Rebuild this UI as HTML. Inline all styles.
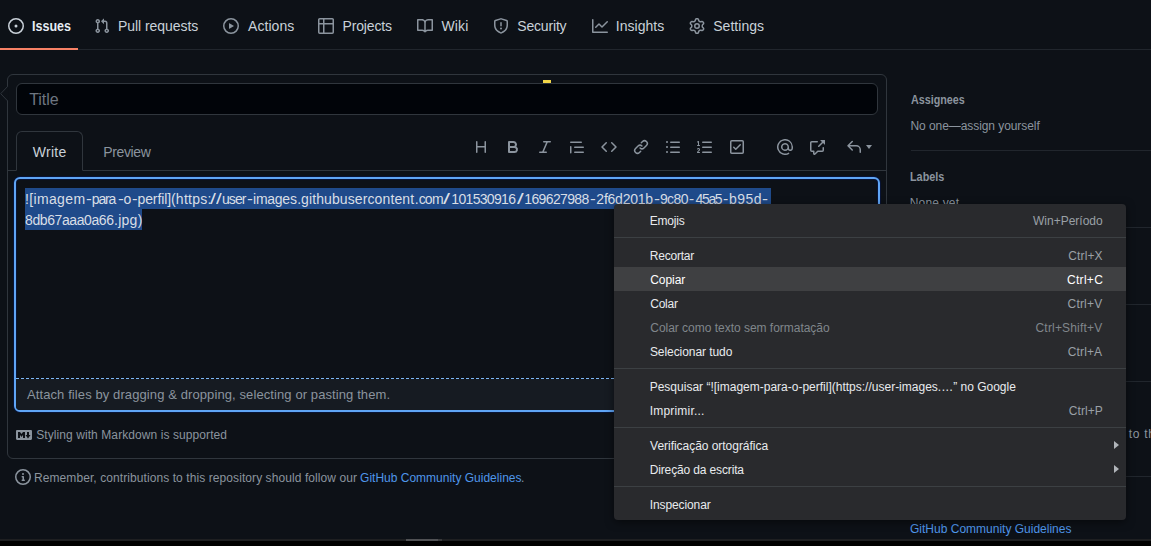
<!DOCTYPE html>
<html lang="en">
<head>
<meta charset="utf-8">
<title>New Issue</title>
<style>
html,body{margin:0;padding:0;}
body{width:1151px;height:546px;overflow:hidden;position:relative;background:#0d1117;font-family:'Liberation Sans',sans-serif;}
.t i{font-style:normal;}
.t{position:absolute;white-space:nowrap;line-height:20px;height:20px;}
.i{position:absolute;display:block;}
.b{position:absolute;box-sizing:border-box;}
.hl{position:absolute;height:1px;background:#21262d;}
#menu{position:absolute;left:614px;top:204px;width:512px;height:316px;background:#292a2d;border-radius:4px;z-index:4;box-shadow:0 2px 8px rgba(0,0,0,.5);}
#menu .sep{position:absolute;left:0;right:0;height:1px;background:#3c4043;}
#menu .hi{position:absolute;left:0;right:0;top:63px;height:24px;background:#3f4042;}
.arr{position:absolute;width:0;height:0;border-style:solid;border-width:4px 0 4px 5.5px;border-color:transparent transparent transparent #b0b4b9;z-index:5;}
</style>
</head>
<body>
<!-- repository navigation -->
<div class="hl" style="left:0;top:49px;width:1151px;"></div>
<div class="b" style="left:0;top:48px;width:78px;height:2px;background:#f78166;"></div>

<!-- comment box -->
<div class="b" style="left:7px;top:74px;width:880px;height:385px;border:1px solid #30363d;border-radius:6px;"></div>
<svg class="i" style="left:0;top:85px;" width="9" height="18" viewBox="0 0 9 18"><path d="M8 1.300 L0.700 8.700 L8 16.100 Z" fill="#0d1117" stroke="none"/><rect x="7" y="2.200" width="1.200" height="13" fill="#0d1117"/><path d="M7.600 1.500 L0.700 8.700 L7.600 15.900" fill="none" stroke="#30363d" stroke-width="1"/></svg>
<!-- title input -->
<div class="b" style="left:16px;top:83px;width:862px;height:32px;border:1px solid #30363d;border-radius:6px;background:#010409;"></div>
<div class="b" style="left:543px;top:80px;width:8px;height:3px;background:#f2d648;"></div>
<!-- tabs -->
<div class="hl" style="left:8px;top:170px;width:878px;background:#30363d;"></div>
<div class="b" style="left:16px;top:131px;width:67px;height:40px;border:1px solid #30363d;border-bottom:1px solid #0d1117;border-radius:6px 6px 0 0;background:#0d1117;"></div>
<!-- textarea -->
<div class="b" style="left:14px;top:177px;width:866px;height:235px;border:2px solid #5fa5f5;border-radius:6px;background:#0d1117;box-shadow:0 0 0 1px rgba(6,24,80,.55),inset 0 0 0 1px rgba(6,24,80,.55);"></div>
<div class="b" style="left:16px;top:379px;width:862px;height:31px;background:#161b22;border-radius:0 0 4px 4px;"></div>
<div class="b" style="left:16px;top:378px;width:862px;height:1px;background:repeating-linear-gradient(90deg,#7db6f5 0,#7db6f5 3px,transparent 3px,transparent 5px);"></div>
<div class="b" style="left:25px;top:188px;width:746px;height:21px;background:#1f4a8a;"></div>
<div class="b" style="left:25px;top:209px;width:117px;height:21px;background:#1f4a8a;"></div>

<!-- sidebar dividers -->
<div class="hl" style="left:911px;top:150px;width:240px;"></div>
<div class="hl" style="left:910px;top:227px;width:241px;"></div>
<div class="hl" style="left:910px;top:304px;width:241px;"></div>
<div class="hl" style="left:910px;top:381px;width:241px;"></div>
<div class="hl" style="left:910px;top:476px;width:241px;"></div>

<svg class="i" style="left:8px;top:18px;" width="16" height="16" viewBox="0 0 16 16" fill="#c9d1d9"><path d="M8 9.5a1.5 1.5 0 1 0 0-3 1.5 1.5 0 0 0 0 3Z"/><path d="M8 0a8 8 0 1 1 0 16A8 8 0 0 1 8 0ZM1.5 8a6.5 6.5 0 1 0 13 0 6.5 6.5 0 0 0-13 0Z"/></svg>
<svg class="i" style="left:94px;top:18px;" width="16" height="16" viewBox="0 0 16 16" fill="#8b949e"><path d="M1.5 3.25a2.25 2.25 0 1 1 3 2.122v5.256a2.251 2.251 0 1 1-1.5 0V5.372A2.25 2.25 0 0 1 1.5 3.25Zm5.677-.177L9.573.677A.25.25 0 0 1 10 .854V2.5h1A2.5 2.5 0 0 1 13.5 5v5.628a2.251 2.251 0 1 1-1.5 0V5a1 1 0 0 0-1-1h-1v1.646a.25.25 0 0 1-.427.177L7.177 3.427a.25.25 0 0 1 0-.354ZM3.75 2.5a.75.75 0 1 0 0 1.5.75.75 0 0 0 0-1.5Zm0 9.5a.75.75 0 1 0 0 1.5.75.75 0 0 0 0-1.5Zm8.25.75a.75.75 0 1 0 1.5 0 .75.75 0 0 0-1.5 0Z"/></svg>
<svg class="i" style="left:223px;top:18px;" width="16" height="16" viewBox="0 0 16 16" fill="#8b949e"><path d="M8 0a8 8 0 1 1 0 16A8 8 0 0 1 8 0ZM1.5 8a6.5 6.5 0 1 0 13 0 6.5 6.5 0 0 0-13 0Zm4.879-2.773 4.264 2.559a.25.25 0 0 1 0 .428l-4.264 2.559A.25.25 0 0 1 6 10.559V5.442a.25.25 0 0 1 .379-.215Z"/></svg>
<svg class="i" style="left:318px;top:18px;" width="16" height="16" viewBox="0 0 16 16" fill="#8b949e"><path d="M0 1.75C0 .784.784 0 1.75 0h12.5C15.216 0 16 .784 16 1.75v12.5A1.75 1.75 0 0 1 14.25 16H1.75A1.75 1.75 0 0 1 0 14.25ZM6.5 6.5v8h7.75a.25.25 0 0 0 .25-.25V6.5Zm8-1.5V1.75a.25.25 0 0 0-.25-.25H6.5V5Zm-13 1.5v7.750c0 .138.112.25.25.25H5v-8ZM5 5V1.500H1.750a.25.25 0 0 0-.25.25V5Z"/></svg>
<svg class="i" style="left:417px;top:18px;" width="16" height="16" viewBox="0 0 16 16" fill="#8b949e"><path d="M0 1.750A.75.75 0 0 1 .75 1h4.253c1.227 0 2.317.59 3 1.501A3.743 3.743 0 0 1 11.006 1h4.245a.75.75 0 0 1 .75.75v10.500a.75.75 0 0 1-.75.75h-4.507a2.250 2.250 0 0 0-1.591.659l-.622.621a.75.75 0 0 1-1.060 0l-.622-.621A2.250 2.250 0 0 0 5.258 13H.750a.75.75 0 0 1-.75-.75Zm7.251 10.324.004-5.073-.002-2.253A2.250 2.250 0 0 0 5.003 2.500H1.500v9h3.757a3.750 3.750 0 0 1 1.994.574ZM8.755 4.750l-.004 7.322a3.752 3.752 0 0 1 1.992-.572H14.500v-9h-3.495a2.250 2.250 0 0 0-2.250 2.250Z"/></svg>
<svg class="i" style="left:493px;top:18px;" width="16" height="16" viewBox="0 0 16 16" fill="#8b949e"><path d="M7.467.133a1.748 1.748 0 0 1 1.066 0l5.250 1.680A1.750 1.750 0 0 1 15 3.480V7c0 1.566-.32 3.182-1.303 4.682-.983 1.498-2.585 2.813-5.032 3.855a1.697 1.697 0 0 1-1.330 0c-2.447-1.042-4.049-2.357-5.032-3.855C1.320 10.182 1 8.566 1 7V3.480a1.750 1.750 0 0 1 1.217-1.667Zm.61 1.429a.25.25 0 0 0-.153 0l-5.250 1.680a.25.25 0 0 0-.174.238V7c0 1.358.275 2.666 1.057 3.860.784 1.194 2.121 2.340 4.366 3.297a.196.196 0 0 0 .154 0c2.245-.956 3.582-2.104 4.366-3.298C13.225 9.666 13.500 8.360 13.500 7V3.480a.251.251 0 0 0-.174-.237l-5.250-1.680ZM8.750 4.750v3a.75.75 0 0 1-1.500 0v-3a.75.75 0 0 1 1.500 0ZM9 10.500a1 1 0 1 1-2 0 1 1 0 0 1 2 0Z"/></svg>
<svg class="i" style="left:592px;top:18px;" width="16" height="16" viewBox="0 0 16 16" fill="#8b949e"><path d="M1.500 1.750V13.500h13.750a.75.75 0 0 1 0 1.500H.750a.75.75 0 0 1-.75-.75V1.750a.75.75 0 0 1 1.500 0Zm14.280 2.530-5.250 5.250a.75.75 0 0 1-1.060 0L7 7.060 4.280 9.780a.751.751 0 0 1-1.042-.018.751.751 0 0 1-.018-1.042l3.250-3.250a.75.75 0 0 1 1.060 0L10 7.940l4.720-4.720a.751.751 0 0 1 1.042.018.751.751 0 0 1 .018 1.042Z"/></svg>
<svg class="i" style="left:689px;top:18px;" width="16" height="16" viewBox="0 0 16 16" fill="#8b949e"><path d="M8 0a8.2 8.2 0 0 1 .701.031C9.444.095 9.990.645 10.160 1.290l.288 1.107c.018.066.079.158.212.224.231.114.454.243.668.386.123.082.233.090.299.071l1.103-.303c.644-.176 1.392.021 1.820.630.270.385.506.792.704 1.218.315.675.111 1.422-.364 1.891l-.814.806c-.049.048-.098.147-.088.294.016.257.016.515 0 .772-.010.147.038.246.088.294l.814.806c.475.469.679 1.216.364 1.891a7.977 7.977 0 0 1-.704 1.217c-.428.610-1.176.807-1.820.630l-1.102-.302c-.067-.019-.177-.011-.300.071a5.909 5.909 0 0 1-.668.386c-.133.066-.194.158-.211.224l-.290 1.106c-.168.646-.715 1.196-1.458 1.260a8.006 8.006 0 0 1-1.402 0c-.743-.064-1.289-.614-1.458-1.260l-.289-1.106c-.018-.066-.079-.158-.212-.224a5.738 5.738 0 0 1-.668-.386c-.123-.082-.233-.090-.299-.071l-1.103.303c-.644.176-1.392-.021-1.820-.630a8.120 8.120 0 0 1-.704-1.218c-.315-.675-.111-1.422.363-1.891l.815-.806c.050-.048.098-.147.088-.294a6.214 6.214 0 0 1 0-.772c.010-.147-.038-.246-.088-.294l-.815-.806C.635 6.045.431 5.298.746 4.623a7.920 7.920 0 0 1 .704-1.217c.428-.610 1.176-.807 1.820-.630l1.102.302c.067.019.177.011.300-.071.214-.143.437-.272.668-.386.133-.066.194-.158.211-.224l.290-1.106C6.009.645 6.556.095 7.299.030 7.530.010 7.764 0 8 0Zm-.571 1.525c-.036.003-.108.036-.137.146l-.289 1.105c-.147.561-.549.967-.998 1.189-.173.086-.340.183-.500.290-.417.278-.970.423-1.529.270l-1.103-.303c-.109-.030-.175.016-.195.045-.220.312-.412.644-.573.990-.014.031-.021.110.059.190l.815.806c.411.406.562.957.530 1.456a4.709 4.709 0 0 0 0 .582c.032.499-.119 1.050-.530 1.456l-.815.806c-.081.080-.073.159-.059.190.162.346.353.677.573.989.020.030.085.076.195.046l1.102-.303c.560-.153 1.113-.008 1.530.270.161.107.328.204.501.290.447.222.850.629.997 1.189l.289 1.105c.029.109.101.143.137.146a6.600 6.600 0 0 0 1.142 0c.036-.003.108-.036.137-.146l.289-1.105c.147-.561.549-.967.998-1.189.173-.086.340-.183.500-.290.417-.278.970-.423 1.529-.270l1.103.303c.109.029.175-.016.195-.045.220-.313.411-.644.573-.990.014-.031.021-.110-.059-.190l-.815-.806c-.411-.406-.562-.957-.530-1.456a4.709 4.709 0 0 0 0-.582c-.032-.499.119-1.050.530-1.456l.815-.806c.081-.080.073-.159.059-.190a6.464 6.464 0 0 0-.573-.989c-.020-.030-.085-.076-.195-.046l-1.102.303c-.560.153-1.113.008-1.530-.270a4.440 4.440 0 0 0-.501-.290c-.447-.222-.850-.629-.997-1.189l-.289-1.105c-.029-.110-.101-.143-.137-.146a6.600 6.600 0 0 0-1.142 0ZM11 8a3 3 0 1 1-6 0 3 3 0 0 1 6 0ZM9.500 8a1.500 1.500 0 1 0-3.001.001A1.500 1.500 0 0 0 9.500 8Z"/></svg>
<svg class="i" style="left:473px;top:139px;" width="16" height="16" viewBox="0 0 16 16" fill="#8b949e"><path fill-rule="evenodd" d="M3.75 2a.75.75 0 01.75.75V7h7V2.75a.75.75 0 011.5 0v10.500a.75.75 0 01-1.500 0V8.500h-7v4.750a.75.75 0 01-1.500 0V2.750A.75.75 0 013.750 2z"/></svg>
<svg class="i" style="left:505px;top:139px;" width="16" height="16" viewBox="0 0 16 16" fill="#8b949e"><path fill-rule="evenodd" d="M4 2a1 1 0 00-1 1v10a1 1 0 001 1h5.500a3.500 3.500 0 001.852-6.470A3.500 3.500 0 008.500 2H4zm4.500 5a1.500 1.500 0 100-3H5v3h3.500zM5 9v3h4.500a1.500 1.500 0 000-3H5z"/></svg>
<svg class="i" style="left:537px;top:139px;" width="16" height="16" viewBox="0 0 16 16" fill="#8b949e"><path fill-rule="evenodd" d="M6 2.750A.75.75 0 016.750 2h6.500a.75.75 0 010 1.500h-2.505l-3.858 9H9.250a.75.75 0 010 1.500h-6.500a.75.75 0 010-1.500h2.505l3.858-9H6.750A.75.75 0 016 2.750z"/></svg>
<svg class="i" style="left:569px;top:139px;" width="16" height="16" viewBox="0 0 16 16" fill="#8b949e"><path fill-rule="evenodd" d="M1.750 2.500a.75.75 0 000 1.500h10.500a.75.75 0 000-1.500H1.750zm4 5a.75.75 0 000 1.500h8.500a.75.75 0 000-1.500h-8.500zm0 5a.75.75 0 000 1.500h8.500a.75.75 0 000-1.500h-8.500zM2.500 7.750a.75.75 0 00-1.500 0v6a.75.75 0 001.500 0v-6z"/></svg>
<svg class="i" style="left:601px;top:139px;" width="16" height="16" viewBox="0 0 16 16" fill="#8b949e"><path fill-rule="evenodd" d="M4.720 3.220a.75.75 0 011.060 1.060L2.060 8l3.720 3.720a.75.75 0 11-1.060 1.060L.470 8.530a.75.75 0 010-1.060l4.250-4.250zm6.560 0a.75.75 0 10-1.060 1.060L13.940 8l-3.720 3.720a.75.75 0 101.060 1.060l4.250-4.250a.75.75 0 000-1.060l-4.250-4.250z"/></svg>
<svg class="i" style="left:633px;top:139px;" width="16" height="16" viewBox="0 0 16 16" fill="#8b949e"><path fill-rule="evenodd" d="M7.775 3.275a.75.75 0 001.060 1.060l1.250-1.250a2 2 0 112.830 2.830l-2.500 2.500a2 2 0 01-2.830 0 .75.75 0 00-1.060 1.060 3.500 3.500 0 004.950 0l2.500-2.500a3.500 3.500 0 00-4.950-4.950l-1.250 1.250zm-4.690 9.640a2 2 0 010-2.830l2.500-2.500a2 2 0 012.830 0 .75.75 0 001.060-1.060 3.500 3.500 0 00-4.950 0l-2.500 2.500a3.500 3.500 0 004.950 4.950l1.250-1.250a.75.75 0 00-1.060-1.060l-1.250 1.250a2 2 0 01-2.830 0z"/></svg>
<svg class="i" style="left:665px;top:139px;" width="16" height="16" viewBox="0 0 16 16" fill="#8b949e"><path fill-rule="evenodd" d="M2 4a1 1 0 100-2 1 1 0 000 2zm3.750-1.500a.75.75 0 000 1.500h8.500a.75.75 0 000-1.500h-8.500zm0 5a.75.75 0 000 1.500h8.500a.75.75 0 000-1.500h-8.500zm0 5a.75.75 0 000 1.500h8.500a.75.75 0 000-1.500h-8.500zM3 8a1 1 0 11-2 0 1 1 0 012 0zm-1 6a1 1 0 100-2 1 1 0 000 2z"/></svg>
<svg class="i" style="left:697px;top:139px;" width="16" height="16" viewBox="0 0 16 16" fill="#8b949e"><path fill-rule="evenodd" d="M2.003 2.500a.5.5 0 00-.723-.447l-1.003.5a.5.5 0 00.446.895l.280-.140V6H.500a.5.5 0 000 1h2.006a.5.5 0 100-1h-.503V2.500zM5 3.250a.75.75 0 01.75-.75h8.500a.75.75 0 010 1.500h-8.500A.75.75 0 015 3.250zm0 5a.75.75 0 01.75-.75h8.500a.75.75 0 010 1.500h-8.500A.75.75 0 015 8.250zm0 5a.75.75 0 01.75-.75h8.500a.75.75 0 010 1.500h-8.500a.75.75 0 01-.75-.75zM.924 10.320l.003-.004a.851.851 0 01.144-.153A.66.66 0 011.500 10c.195 0 .306.068.374.146a.57.57 0 01.128.376c0 .453-.269.682-.800 1.078l-.035.025C.692 11.980 0 12.495 0 13.500a.5.5 0 00.5.5h2.003a.5.5 0 000-1H1.146c.132-.197.351-.372.654-.597l.047-.035c.470-.350 1.156-.858 1.156-1.845 0-.365-.118-.744-.377-1.038-.268-.303-.658-.484-1.126-.484-.480 0-.840.202-1.068.392a1.858 1.858 0 00-.348.384l-.007.011-.002.004-.001.002-.001.001a.5.5 0 00.851.525z"/></svg>
<svg class="i" style="left:729px;top:139px;" width="16" height="16" viewBox="0 0 16 16" fill="#8b949e"><path fill-rule="evenodd" d="M2.500 2.750a.25.25 0 01.25-.25h10.500a.25.25 0 01.25.25v10.500a.25.25 0 01-.25.25H2.750a.25.25 0 01-.25-.25V2.750zM2.750 1A1.750 1.750 0 001 2.750v10.500c0 .966.784 1.750 1.750 1.750h10.500A1.750 1.750 0 0015 13.250V2.750A1.750 1.750 0 0013.250 1H2.750zm9.030 5.280a.75.75 0 00-1.060-1.060L6.750 9.190 5.280 7.720a.75.75 0 00-1.060 1.060l2 2a.75.75 0 001.060 0l4.500-4.500z"/></svg>
<svg class="i" style="left:777px;top:139px;" width="16" height="16" viewBox="0 0 16 16" fill="#8b949e"><path fill-rule="evenodd" d="M4.750 2.370a6.500 6.500 0 006.500 11.260.75.75 0 01.75 1.298 8 8 0 113.994-7.273.754.754 0 01.006.095v1.500a2.750 2.750 0 01-5.072 1.475A4 4 0 1112 8v1.250a1.250 1.250 0 002.500 0V8a6.500 6.500 0 00-9.750-5.630zM10.500 8a2.500 2.500 0 10-5 0 2.500 2.500 0 005 0z"/></svg>
<svg class="i" style="left:809px;top:139px;" width="16" height="16" viewBox="0 0 16 16" fill="#8b949e"><path fill-rule="evenodd" d="M16 1.250v4.146a.25.25 0 01-.427.177L14.030 4.030l-3.750 3.750a.75.75 0 11-1.060-1.060l3.750-3.750-1.543-1.543A.25.25 0 0111.604 1h4.146a.25.25 0 01.25.25zM2.750 3.500a.25.25 0 00-.25.25v7.500c0 .138.112.25.25.25h2a.75.75 0 01.75.75v2.190l2.720-2.720a.75.75 0 01.530-.220h4.500a.25.25 0 00.25-.25v-2.500a.75.75 0 111.500 0v2.500A1.750 1.750 0 0113.250 13H9.060l-2.573 2.573A1.457 1.457 0 014 14.543V13H2.750A1.750 1.750 0 011 11.250v-7.500C1 2.784 1.784 2 2.750 2h5.500a.75.75 0 010 1.500h-5.500z"/></svg>
<svg class="i" style="left:846px;top:139px;" width="16" height="16" viewBox="0 0 16 16" fill="#8b949e"><path fill-rule="evenodd" d="M6.780 1.970a.75.75 0 010 1.060L3.810 6h6.440A4.750 4.750 0 0115 10.750v2.500a.75.75 0 01-1.500 0v-2.500a3.250 3.250 0 00-3.250-3.250H3.810l2.970 2.970a.75.75 0 11-1.060 1.060L1.470 7.280a.75.75 0 010-1.060l4.250-4.250a.75.75 0 011.060 0z"/></svg>
<svg class="i" style="left:16px;top:427px;" width="16" height="16" viewBox="0 0 16 16" fill="#8b949e"><path fill-rule="evenodd" d="M14.850 3H1.150C.52 3 0 3.520 0 4.150v7.690C0 12.480.52 13 1.150 13h13.690c.64 0 1.150-.520 1.150-1.150v-7.700C16 3.520 15.480 3 14.850 3zM9 11H7V8L5.500 9.920 4 8v3H2V5h2l1.500 2L7 5h2v6zm2.990.5L9.500 8H11V5h2v3h1.500l-2.510 3.500z"/></svg>
<svg class="i" style="left:15px;top:468.5px;" width="16" height="16" viewBox="0 0 16 16" fill="#8b949e"><path d="M0 8a8 8 0 1 1 16 0A8 8 0 0 1 0 8Zm8-6.500a6.500 6.500 0 1 0 0 13 6.500 6.500 0 0 0 0-13ZM6.500 7.750A.75.75 0 0 1 7.250 7h1a.75.75 0 0 1 .75.75v2.750h.25a.75.75 0 0 1 0 1.500h-2a.75.75 0 0 1 0-1.500h.25v-2h-.25a.75.75 0 0 1-.75-.75ZM8 6a1 1 0 1 1 0-2 1 1 0 0 1 0 2Z"/></svg>
<div class="b" style="left:866px;top:145px;width:0;height:0;border-style:solid;border-width:4px 3.75px 0 3.75px;border-color:#8b949e transparent transparent transparent;"></div>
<span class="t" style="left:31.61px;top:16.00px;font-size:14px;color:#e6edf3;font-weight:700;transform:scaleX(0.8928);transform-origin:0 50%;">Issues</span>
<span class="t" style="left:118.00px;top:16.00px;font-size:14px;color:#c9d1d9;letter-spacing:-0.055px;">Pull requests</span>
<span class="t" style="left:248.00px;top:16.00px;font-size:14px;color:#c9d1d9;letter-spacing:0.057px;">Actions</span>
<span class="t" style="left:342.50px;top:16.00px;font-size:14px;color:#c9d1d9;letter-spacing:-0.143px;">Projects</span>
<span class="t" style="left:441.50px;top:16.00px;font-size:14px;color:#c9d1d9;letter-spacing:0.127px;">Wiki</span>
<span class="t" style="left:517.23px;top:16.00px;font-size:14px;color:#c9d1d9;letter-spacing:-0.169px;">Security</span>
<span class="t" style="left:615.70px;top:16.00px;font-size:14px;color:#c9d1d9;letter-spacing:0.050px;">Insights</span>
<span class="t" style="left:713.23px;top:16.00px;font-size:14px;color:#c9d1d9;letter-spacing:0.039px;">Settings</span>
<span class="t" style="left:29.13px;top:90.00px;font-size:16px;color:#6e7681;letter-spacing:-0.033px;">Title</span>
<span class="t" style="left:32.75px;top:142.00px;font-size:14px;color:#c9d1d9;letter-spacing:0.284px;">Write</span>
<span class="t" style="left:103.25px;top:142.00px;font-size:14px;color:#8b949e;letter-spacing:-0.375px;">Preview</span>
<div class="t" style="left:24.88px;top:189.00px;font-size:14px;color:#d8dee6;"><span style="letter-spacing:0.376px;">![imagem</span><span style="display:inline-block;margin-left:0.48px;transform:scaleX(1.2363);transform-origin:0 50%;">-</span><span style="margin-left:1.13px;letter-spacing:-1.130px;">para</span><span style="display:inline-block;margin-left:2.31px;transform:scaleX(1.2363);transform-origin:0 50%;">-</span><span style="margin-left:1.28px;">o</span><span style="display:inline-block;margin-left:0.49px;transform:scaleX(1.1813);transform-origin:0 50%;">-</span><span style="margin-left:1.00px;letter-spacing:-0.072px;">perfil]</span><span style="margin-left:-0.30px;letter-spacing:0.294px;">(https</span><span style="margin-left:-0.29px;">:</span><span style="display:inline-block;margin-left:-1.55px;transform:scaleX(1.5250);transform-origin:0 50%;">/</span><span style="display:inline-block;margin-left:2.01px;transform:scaleX(1.4750);transform-origin:0 50%;">/</span><span style="margin-left:2.39px;letter-spacing:-0.858px;">user</span><span style="display:inline-block;margin-left:1.76px;transform:scaleX(1.2637);transform-origin:0 50%;">-</span><span style="margin-left:0.93px;letter-spacing:-0.256px;">images</span><span style="margin-left:0.69px;">.</span><span style="margin-left:-0.16px;letter-spacing:0.106px;">githubusercontent</span><span style="margin-left:0.51px;">.</span><span style="margin-left:0.07px;letter-spacing:-0.760px;">com</span><span style="display:inline-block;margin-left:0.41px;transform:scaleX(1.8000);transform-origin:0 50%;">/</span><span style="margin-left:4.21px;letter-spacing:-0.671px;">101530916</span><span style="display:inline-block;margin-left:1.17px;transform:scaleX(1.7250);transform-origin:0 50%;">/</span><span style="margin-left:3.91px;letter-spacing:-0.641px;">169627988</span><span style="display:inline-block;margin-left:1.63px;transform:scaleX(1.2363);transform-origin:0 50%;">-</span><span style="margin-left:1.45px;letter-spacing:-0.236px;">2f6d201b</span><span style="display:inline-block;margin-left:0.96px;transform:scaleX(1.2912);transform-origin:0 50%;">-</span><span style="margin-left:1.43px;letter-spacing:-0.583px;">9c80</span><span style="display:inline-block;margin-left:1.37px;transform:scaleX(1.0989);transform-origin:0 50%;">-</span><span style="margin-left:1.55px;letter-spacing:-1.342px;">45a5</span><span style="display:inline-block;margin-left:2.10px;transform:scaleX(1.1264);transform-origin:0 50%;">-</span><span style="margin-left:0.89px;letter-spacing:0.522px;">b95d</span><span style="display:inline-block;margin-left:-0.66px;transform:scaleX(1.2912);transform-origin:0 50%;">-</span></div>
<div class="t" style="left:25.00px;top:210.00px;font-size:14px;color:#d8dee6;"><span style="letter-spacing:-0.400px;">8db67aaa0a66</span><span style="margin-left:0.43px;letter-spacing:0.256px;">.jpg)</span></div>
<span class="t" style="left:27.00px;top:385.00px;font-size:13px;color:#8b949e;letter-spacing:0.098px;">Attach files by dragging &amp; dropping, selecting or pasting them.</span>
<span class="t" style="left:36.20px;top:425.00px;font-size:12px;color:#8b949e;letter-spacing:0.083px;">Styling with Markdown is supported</span>
<div class="t" style="left:34.00px;top:468.00px;font-size:12px;color:#8b949e;"><span style="letter-spacing:0.082px;">Remember, contributions to this repository should follow our </span><span style="color:#4f96ea;margin-left:-0.43px;">GitHub Community Guidelines</span><span style="margin-left:-0.54px;">.</span></div>
<span class="t" style="left:910.53px;top:90.00px;font-size:12px;color:#8b949e;font-weight:700;transform:scaleX(0.8941);transform-origin:0 50%;">Assignees</span>
<span class="t" style="left:910.50px;top:116.00px;font-size:12px;color:#8b949e;letter-spacing:-0.071px;">No one—assign yourself</span>
<span class="t" style="left:910.15px;top:167.00px;font-size:12px;color:#8b949e;font-weight:700;transform:scaleX(0.9021);transform-origin:0 50%;">Labels</span>
<span class="t" style="left:909.75px;top:193.00px;font-size:12px;color:#8b949e;letter-spacing:0.179px;">None yet</span>
<span class="t" style="left:910.14px;top:244.00px;font-size:12px;color:#8b949e;font-weight:700;transform:scaleX(0.9118);transform-origin:0 50%;">Projects</span>
<span class="t" style="left:909.75px;top:270.00px;font-size:12px;color:#8b949e;letter-spacing:0.179px;">None yet</span>
<span class="t" style="left:910.09px;top:321.00px;font-size:12px;color:#8b949e;font-weight:700;letter-spacing:-0.386px;">Milestone</span>
<span class="t" style="left:909.75px;top:346.00px;font-size:12px;color:#8b949e;letter-spacing:0.520px;">No milestone</span>
<span class="t" style="left:910.09px;top:398.00px;font-size:12px;color:#8b949e;font-weight:700;letter-spacing:-0.022px;">Development</span>
<div class="t" style="left:909.95px;top:424.00px;font-size:12px;color:#8b949e;"><span style="letter-spacing:-0.064px;">Shows branches and pull requests linked </span><span style="margin-left:0.01px;letter-spacing:0.658px;">to this</span></div>
<span class="t" style="left:910.09px;top:442.00px;font-size:12px;color:#8b949e;letter-spacing:-0.092px;">issue.</span>
<span class="t" style="left:910.09px;top:494.00px;font-size:12px;color:#8b949e;font-weight:700;letter-spacing:-0.068px;">Helpful resources</span>
<span class="t" style="left:910.04px;top:519.00px;font-size:12px;color:#4f96ea;">GitHub Community Guidelines</span>

<!-- context menu -->
<div id="menu">
 <div class="hi"></div>
 <div class="sep" style="top:33px"></div>
 <div class="sep" style="top:164px"></div>
 <div class="sep" style="top:223px"></div>
 <div class="sep" style="top:282px"></div>
</div>
<div class="arr" style="left:1113.5px;top:441px;"></div>
<div class="arr" style="left:1113.5px;top:465px;"></div>
<span class="t" style="left:649.70px;top:211.00px;font-size:12px;color:#e8eaed;letter-spacing:-0.198px;z-index:5;">Emojis</span>
<span class="t" style="left:649.70px;top:246.00px;font-size:12px;color:#e8eaed;letter-spacing:-0.200px;z-index:5;">Recortar</span>
<span class="t" style="left:650.24px;top:270.00px;font-size:12px;color:#ffffff;letter-spacing:-0.067px;z-index:5;">Copiar</span>
<span class="t" style="left:650.24px;top:294.00px;font-size:12px;color:#e8eaed;letter-spacing:-0.253px;z-index:5;">Colar</span>
<span class="t" style="left:650.24px;top:318.00px;font-size:12px;color:#80868b;letter-spacing:-0.021px;z-index:5;">Colar como texto sem formatação</span>
<span class="t" style="left:649.90px;top:342.00px;font-size:12px;color:#e8eaed;letter-spacing:-0.064px;z-index:5;">Selecionar tudo</span>
<span class="t" style="left:649.70px;top:377.00px;font-size:12px;color:#e8eaed;z-index:5;">Pesquisar “![imagem-para-o-perfil](https:<i>//</i>user-images.…” no Google</span>
<span class="t" style="left:649.70px;top:401.00px;font-size:12px;color:#e8eaed;letter-spacing:0.200px;z-index:5;">Imprimir...</span>
<span class="t" style="left:650.10px;top:436.00px;font-size:12px;color:#e8eaed;letter-spacing:-0.034px;z-index:5;">Verificação ortográfica</span>
<span class="t" style="left:649.70px;top:460.00px;font-size:12px;color:#e8eaed;letter-spacing:-0.139px;z-index:5;">Direção da escrita</span>
<span class="t" style="left:649.70px;top:495.00px;font-size:12px;color:#e8eaed;letter-spacing:-0.095px;z-index:5;">Inspecionar</span>
<span class="t" style="left:1033.00px;top:211.00px;font-size:12px;color:#9aa0a6;letter-spacing:-0.004px;z-index:5;">Win+Período</span>
<span class="t" style="left:1068.29px;top:246.00px;font-size:12px;color:#9aa0a6;letter-spacing:0.125px;z-index:5;">Ctrl+X</span>
<span class="t" style="left:1067.04px;top:270.00px;font-size:12px;color:#ffffff;letter-spacing:0.295px;z-index:5;">Ctrl+C</span>
<span class="t" style="left:1067.54px;top:294.00px;font-size:12px;color:#9aa0a6;letter-spacing:0.186px;z-index:5;">Ctrl+V</span>
<span class="t" style="left:1035.54px;top:318.00px;font-size:12px;color:#80868b;letter-spacing:0.175px;z-index:5;">Ctrl+Shift+V</span>
<span class="t" style="left:1067.84px;top:342.00px;font-size:12px;color:#9aa0a6;letter-spacing:0.118px;z-index:5;">Ctrl+A</span>
<span class="t" style="left:1068.74px;top:401.00px;font-size:12px;color:#9aa0a6;letter-spacing:0.074px;z-index:5;">Ctrl+P</span>

<!-- bottom bar -->
<div class="b" style="left:0;top:539px;width:1151px;height:2px;background:#1e1f21;z-index:6;"></div>
<div class="b" style="left:0;top:541px;width:1151px;height:5px;background:#000;z-index:6;"></div>
<div class="b" style="left:406px;top:539px;width:32px;height:2px;background:#505154;z-index:7;"></div>
<div class="b" style="left:438px;top:539px;width:4px;height:2px;background:#38393b;z-index:7;"></div>
</body>
</html>
